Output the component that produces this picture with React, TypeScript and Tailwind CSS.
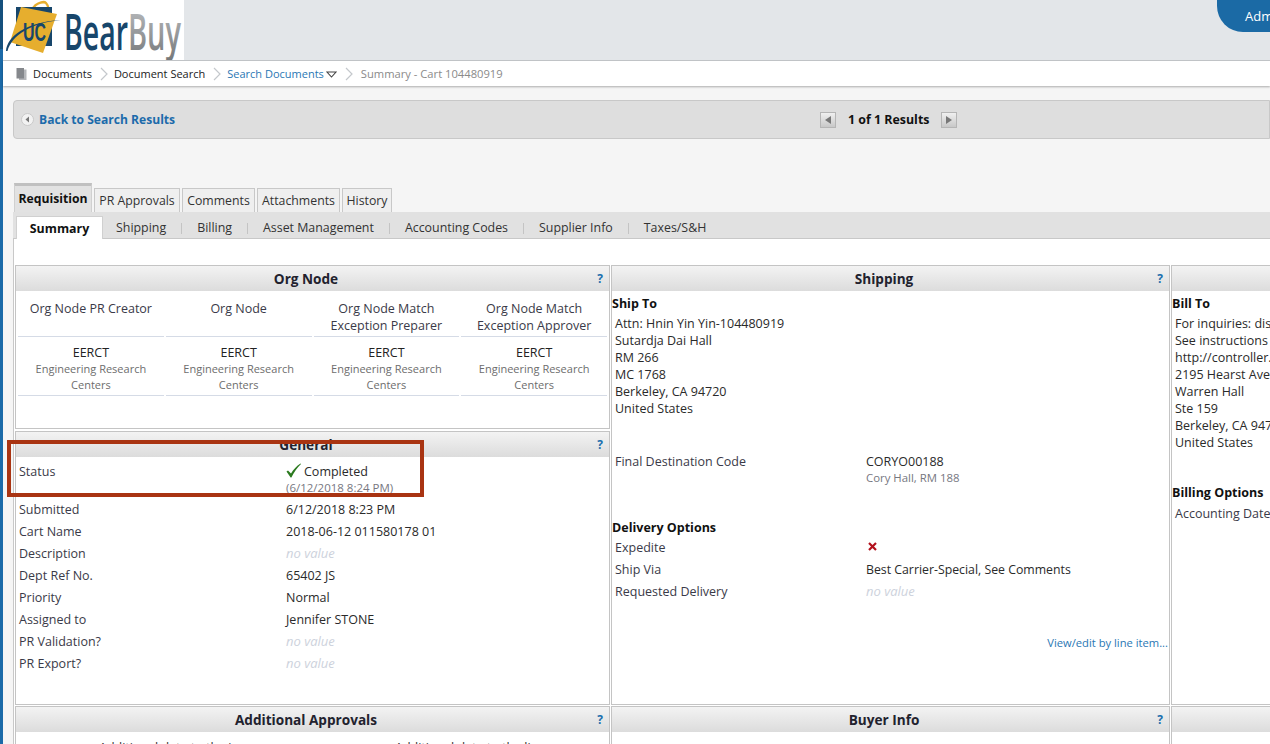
import React from "react";

function Logo() {
  return (
    <svg width="181" height="60" viewBox="0 0 181 60" className="block">
      <defs>
        <linearGradient id="buy" x1="0" y1="0" x2="0" y2="1">
          <stop offset="0" stopColor="#c4c6c8" />
          <stop offset="1" stopColor="#6f7274" />
        </linearGradient>
      </defs>
      <path d="M29 13 C29 3 41 1 43 3 C46 6 46 11 44 16" fill="none" stroke="#e5ae2f" strokeWidth="2.4" />
      <path d="M13 7 H49 V46 H13 Z" fill="#17466b" />
      <path d="M18 7 L54 14 L40 53 L7 42 Z" fill="#e6ae2e" />
      <path d="M3 51 C4 37 22 22 58 20 C28 23 9 35 4.5 51 Z" fill="#17466b" />
      <text x="20" y="41" fontFamily="'Liberation Sans', sans-serif" fontWeight="700" fontSize="26" fill="#17466b" textLength="23" lengthAdjust="spacingAndGlyphs">UC</text>
      <text x="61" y="50" fontFamily="'Open Sans', sans-serif" fontWeight="600" fontSize="50" fill="#17466b" textLength="64" lengthAdjust="spacingAndGlyphs">Bear</text>
      <text x="125" y="50" fontFamily="'Open Sans', sans-serif" fontWeight="600" fontSize="50" fill="url(#buy)" textLength="53" lengthAdjust="spacingAndGlyphs">Buy</text>
    </svg>
  );
}

function Chevron() {
  return (
    <svg width="8" height="14" viewBox="0 0 8 14" className="shrink-0">
      <path d="M1 1 L7 7 L1 13" fill="none" stroke="#c4c8cc" strokeWidth="1.2" />
    </svg>
  );
}

function PanelHeader({ title, help = true }: { title?: string; help?: boolean }) {
  return (
    <div className="relative h-[25px] shrink-0 bg-gradient-to-b from-[#f3f3f3] to-[#dcdcdc] flex items-center justify-center pr-[13px] pt-px">
      <span className="text-[13.6px] font-bold text-[#22222e]">{title}</span>
      {help && <span className="absolute right-[6px] top-[4px] text-[12px] font-bold text-[#1b6fae]">?</span>}
    </div>
  );
}

function OrgCol({ head }: { head: string[] }) {
  return (
    <div className="flex flex-col items-stretch">
      <div className="h-[46px] pt-[9px] text-center leading-[17px] text-[#3a3a48] border-b border-[#d5dbe6] mx-px">
        {head.map((h) => <div key={h}>{h}</div>)}
      </div>
      <div className="h-[59px] pt-[7px] text-center border-b border-[#d5dbe6] mx-px">
        <div className="leading-[17px] text-[#222]">EERCT</div>
        <div className="text-[11px] leading-[16px] text-[#6d6d6d] px-[10px]">Engineering Research Centers</div>
      </div>
    </div>
  );
}

function Row({ label, value, none }: { label: string; value?: string; none?: boolean }) {
  return (
    <div className="flex h-[22px] items-center">
      <div className="w-[267px] shrink-0 text-[#3a3a48]">{label}</div>
      {none ? (
        <div className="italic text-[13px] text-[#cdd2dc]">no value</div>
      ) : (
        <div className="text-[#2a2a2a]">{value}</div>
      )}
    </div>
  );
}

function SmallRow({ label, children }: { label: string; children: React.ReactNode }) {
  return (
    <div className="flex h-[22px] items-center pl-[3px]">
      <div className="w-[251px] shrink-0 text-[#3a3a48]">{label}</div>
      {children}
    </div>
  );
}

const subTabs = ["Shipping", "Billing", "Asset Management", "Accounting Codes", "Supplier Info"];

export default function App() {
  return (
    <div className="w-[1270px] h-[744px] overflow-hidden flex bg-[#f5f5f5] text-[12.5px] font-['Open_Sans',sans-serif]">
      <div className="w-[3px] shrink-0 flex flex-col">
        <div className="h-[49px] bg-[#15507d]" />
        <div className="flex-1 bg-[#1b6aa8]" />
      </div>
      <div className="flex-1 min-w-0 flex flex-col">
        {/* top bar */}
        <div className="h-[61px] shrink-0 bg-[#e3e6e9] border-b border-[#c4c7ca] flex items-start justify-between">
          <div className="w-[181px] h-[60px] bg-white"><Logo /></div>
          <div className="w-[53px] h-[32px] bg-[#1b6aa5] rounded-bl-[26px] pl-[28px] pt-[7px] text-[13px] text-white overflow-hidden whitespace-nowrap">Admin</div>
        </div>

        {/* breadcrumb */}
        <div className="h-[25px] shrink-0 bg-white shadow-[0_1px_2px_rgba(0,0,0,0.3)] flex items-center pl-[13px] pt-px text-[11px] text-[#222]">
          <svg width="11" height="14" viewBox="0 0 11 14" className="mr-[6px]">
            <rect x="3" y="2.5" width="7.5" height="10.5" fill="#b5b7ba" />
            <rect x="0.5" y="1" width="7.5" height="10.5" fill="#85888c" />
          </svg>
          <span>Documents</span>
          <span className="ml-[8px] mr-[6px]"><Chevron /></span>
          <span>Document Search</span>
          <span className="ml-[8px] mr-[6px]"><Chevron /></span>
          <span className="text-[#2a77b4]">Search Documents</span>
          <svg width="11" height="7" viewBox="0 0 11 7" className="ml-[2px]">
            <path d="M1 1 H10 L5.5 6 Z" fill="none" stroke="#444" strokeWidth="1.1" />
          </svg>
          <span className="ml-[8px] mr-[8px]"><Chevron /></span>
          <span className="text-[#8a8a8a] text-[11.2px]">Summary - Cart 104480919</span>
        </div>

        {/* results bar */}
        <div className="mt-[14px] ml-[10px] h-[39px] shrink-0 bg-[#dedede] border border-[#c8c8c8] rounded-l-[4px] flex items-center relative">
          <svg width="13" height="13" viewBox="0 0 13 13" className="ml-[7px] mr-[5px]">
            <circle cx="6.5" cy="6.5" r="6" fill="#f2f2f2" stroke="#c9c9c9" />
            <path d="M8 3.5 L4.5 6.5 L8 9.5 Z" fill="#777" />
          </svg>
          <span className="text-[12.1px] font-bold text-[#1c6bab] pt-px">Back to Search Results</span>
          <div className="absolute left-[806px] top-[10px] flex items-center">
            <div className="w-[16px] h-[16px] border border-[#b5b5b5] bg-gradient-to-b from-[#f0f0f0] to-[#c8c8c8] flex items-center justify-center">
              <svg width="6" height="8" viewBox="0 0 6 8"><path d="M6 0 L0 4 L6 8 Z" fill="#777" /></svg>
            </div>
            <span className="mx-[12px] text-[12.4px] font-bold text-[#111]">1 of 1 Results</span>
            <div className="w-[16px] h-[16px] border border-[#b5b5b5] bg-gradient-to-b from-[#f0f0f0] to-[#c8c8c8] flex items-center justify-center">
              <svg width="6" height="8" viewBox="0 0 6 8"><path d="M0 0 L6 4 L0 8 Z" fill="#777" /></svg>
            </div>
          </div>
        </div>

        {/* main tabs */}
        <div className="mt-[44px] ml-[11px] h-[29px] shrink-0 flex items-end gap-[2px] text-[12.3px]">
          <div className="w-[78px] h-[29px] bg-[#e2e2e2] border-t-[3px] border-x border-[#c0c0c0] border-x-[#d0d0d0] flex items-center justify-center text-[12.2px] font-bold text-[#111]">Requisition</div>
          {[["PR Approvals", "w-[86px]"], ["Comments", "w-[73px]"], ["Attachments", "w-[83px]"], ["History", "w-[50px]"]].map(([t, w]) => (
            <div key={t} className={`${w} h-[24px] pt-[2px] bg-[#efefef] border border-b-0 border-[#c8c8c8] flex items-center justify-center text-[#333]`}>{t}</div>
          ))}
        </div>

        {/* sub tabs */}
        <div className="ml-[10px] h-[27px] shrink-0 bg-[#e1e1e1] border-b border-[#c8c8c8] flex items-end pl-[3px] text-[12.4px]">
          <div className="w-[87px] h-[23px] bg-white border-t border-x border-[#d0d0d0] -mb-px pt-[3px] flex items-center justify-center font-bold text-[12.4px] text-[#111]">Summary</div>
          <div className="flex h-[23px] items-center ml-[13px] pt-[3px] text-[#333]">
            {subTabs.map((t) => (
              <React.Fragment key={t}>
                <span>{t}</span>
                <span className="mx-[15px] h-[11px] border-r border-[#c4c4c4]" />
              </React.Fragment>
            ))}
            <span>Taxes/S&amp;H</span>
          </div>
        </div>

        {/* content */}
        <div className="ml-[10px] flex-1 min-h-0 bg-white border-l border-[#c8c8c8] pt-[26px] pl-px">
          <div className="flex gap-px items-start">
            {/* left column */}
            <div className="w-[595px] shrink-0 flex flex-col gap-px">
              <div className="h-[164px] border border-[#c4c4c4] flex flex-col bg-white">
                <PanelHeader title="Org Node" />
                <div className="grid grid-cols-4 px-px">
                  <OrgCol head={["Org Node PR Creator"]} />
                  <OrgCol head={["Org Node"]} />
                  <OrgCol head={["Org Node Match", "Exception Preparer"]} />
                  <OrgCol head={["Org Node Match", "Exception Approver"]} />
                </div>
              </div>

              <div className="relative mt-px h-[274px] border border-[#c4c4c4] bg-white flex flex-col">
                <PanelHeader title="General" />
                <div className="px-[3px] pt-[6px]">
                  <div className="flex h-[36px]">
                    <div className="w-[267px] shrink-0 leading-[18px] text-[#3a3a48]">Status</div>
                    <div>
                      <div className="flex items-center h-[18px] text-[#2a2a2a]">
                        <svg width="15" height="15" viewBox="0 0 15 15" className="mr-[3px] -mt-[4px]">
                          <path d="M0.5 8.5 L2 7.5 L5 10.5 C7.5 6.5 10.5 3 14.5 0.5 L15 1 C11 5 8 9 5.4 14.5 L4.6 14.5 Z" fill="#2b7a1f" />
                        </svg>
                        Completed
                      </div>
                      <div className="text-[11.5px] text-[#77777f] leading-[14px]">(6/12/2018 8:24 PM)</div>
                    </div>
                  </div>
                  <Row label="Submitted" value="6/12/2018 8:23 PM" />
                  <Row label="Cart Name" value="2018-06-12 011580178 01" />
                  <Row label="Description" none />
                  <Row label="Dept Ref No." value="65402 JS" />
                  <Row label="Priority" value="Normal" />
                  <Row label="Assigned to" value="Jennifer STONE" />
                  <Row label="PR Validation?" none />
                  <Row label="PR Export?" none />
                </div>
                <div className="absolute left-[-9px] top-[8px] w-[417px] h-[57px] border-[4px] border-[#a93412]" />
              </div>

              <div className="h-[40px] border border-[#c4c4c4] bg-white flex flex-col">
                <PanelHeader title="Additional Approvals" />
                <div className="flex pt-[7px] text-[#333] whitespace-nowrap">
                  <span className="ml-[83px] w-[296px]">Additional data to the inv</span>
                  <span>Additional data to the line</span>
                </div>
              </div>
            </div>

            {/* shipping column */}
            <div className="w-[559px] shrink-0 flex flex-col gap-px">
              <div className="h-[440px] border border-[#c4c4c4] bg-white flex flex-col">
                <PanelHeader title="Shipping" />
                <div className="pt-[3px] text-[#2a2a2a] flex-1 flex flex-col">
                  <div className="h-[20px] leading-[20px] font-bold text-[#111]">Ship To</div>
                  <div className="pl-[3px] leading-[17px] h-[136px] pt-[1px]">
                    <div>Attn: Hnin Yin Yin-104480919</div>
                    <div>Sutardja Dai Hall</div>
                    <div>RM 266</div>
                    <div>MC 1768</div>
                    <div>Berkeley, CA 94720</div>
                    <div>United States</div>
                  </div>
                  <div className="flex pl-[3px] pt-[3px] h-[69px]">
                    <div className="w-[251px] shrink-0 text-[#3a3a48] leading-[18px]">Final Destination Code</div>
                    <div>
                      <div className="leading-[17px]">CORYO00188</div>
                      <div className="text-[11.4px] text-[#77777f] leading-[15px]">Cory Hall, RM 188</div>
                    </div>
                  </div>
                  <div className="h-[18px] leading-[18px] font-bold text-[#111]">Delivery Options</div>
                  <SmallRow label="Expedite">
                    <svg width="9" height="9" viewBox="0 0 9 9" className="ml-[2px] -mt-[3px]">
                      <path d="M1 1 L8 8 M8 1 L1 8" stroke="#b3121d" strokeWidth="2.2" />
                    </svg>
                  </SmallRow>
                  <SmallRow label="Ship Via"><span className="text-[12.3px]">Best Carrier-Special, See Comments</span></SmallRow>
                  <SmallRow label="Requested Delivery"><span className="italic text-[13px] text-[#cdd2dc]">no value</span></SmallRow>
                  <div className="mt-[32px] pr-[1px] text-right text-[11.2px] text-[#2a77b4]">View/edit by line item...</div>
                </div>
              </div>
              <div className="h-[40px] border border-[#c4c4c4] bg-white">
                <PanelHeader title="Buyer Info" />
              </div>
            </div>

            {/* third column */}
            <div className="w-[400px] shrink-0 flex flex-col gap-px">
              <div className="h-[440px] border border-[#c4c4c4] bg-white flex flex-col">
                <PanelHeader help={false} />
                <div className="pt-[3px] text-[#2a2a2a] whitespace-nowrap">
                  <div className="h-[20px] leading-[20px] font-bold text-[#111]">Bill To</div>
                  <div className="pl-[3px] leading-[17px] h-[169px] pt-[1px]">
                    <div>For inquiries: disbursements@berkeley.edu</div>
                    <div>See instructions for invoices</div>
                    <div>http://controller.berkeley.edu</div>
                    <div>2195 Hearst Avenue</div>
                    <div>Warren Hall</div>
                    <div>Ste 159</div>
                    <div>Berkeley, CA 94720</div>
                    <div>United States</div>
                  </div>
                  <div className="h-[20px] leading-[20px] font-bold text-[#111]">Billing Options</div>
                  <div className="pl-[3px] leading-[22px] text-[#3a3a48]">Accounting Date</div>
                </div>
              </div>
              <div className="h-[40px] border border-[#c4c4c4] bg-white">
                <PanelHeader help={false} />
              </div>
            </div>
          </div>
        </div>
      </div>
    </div>
  );
}
